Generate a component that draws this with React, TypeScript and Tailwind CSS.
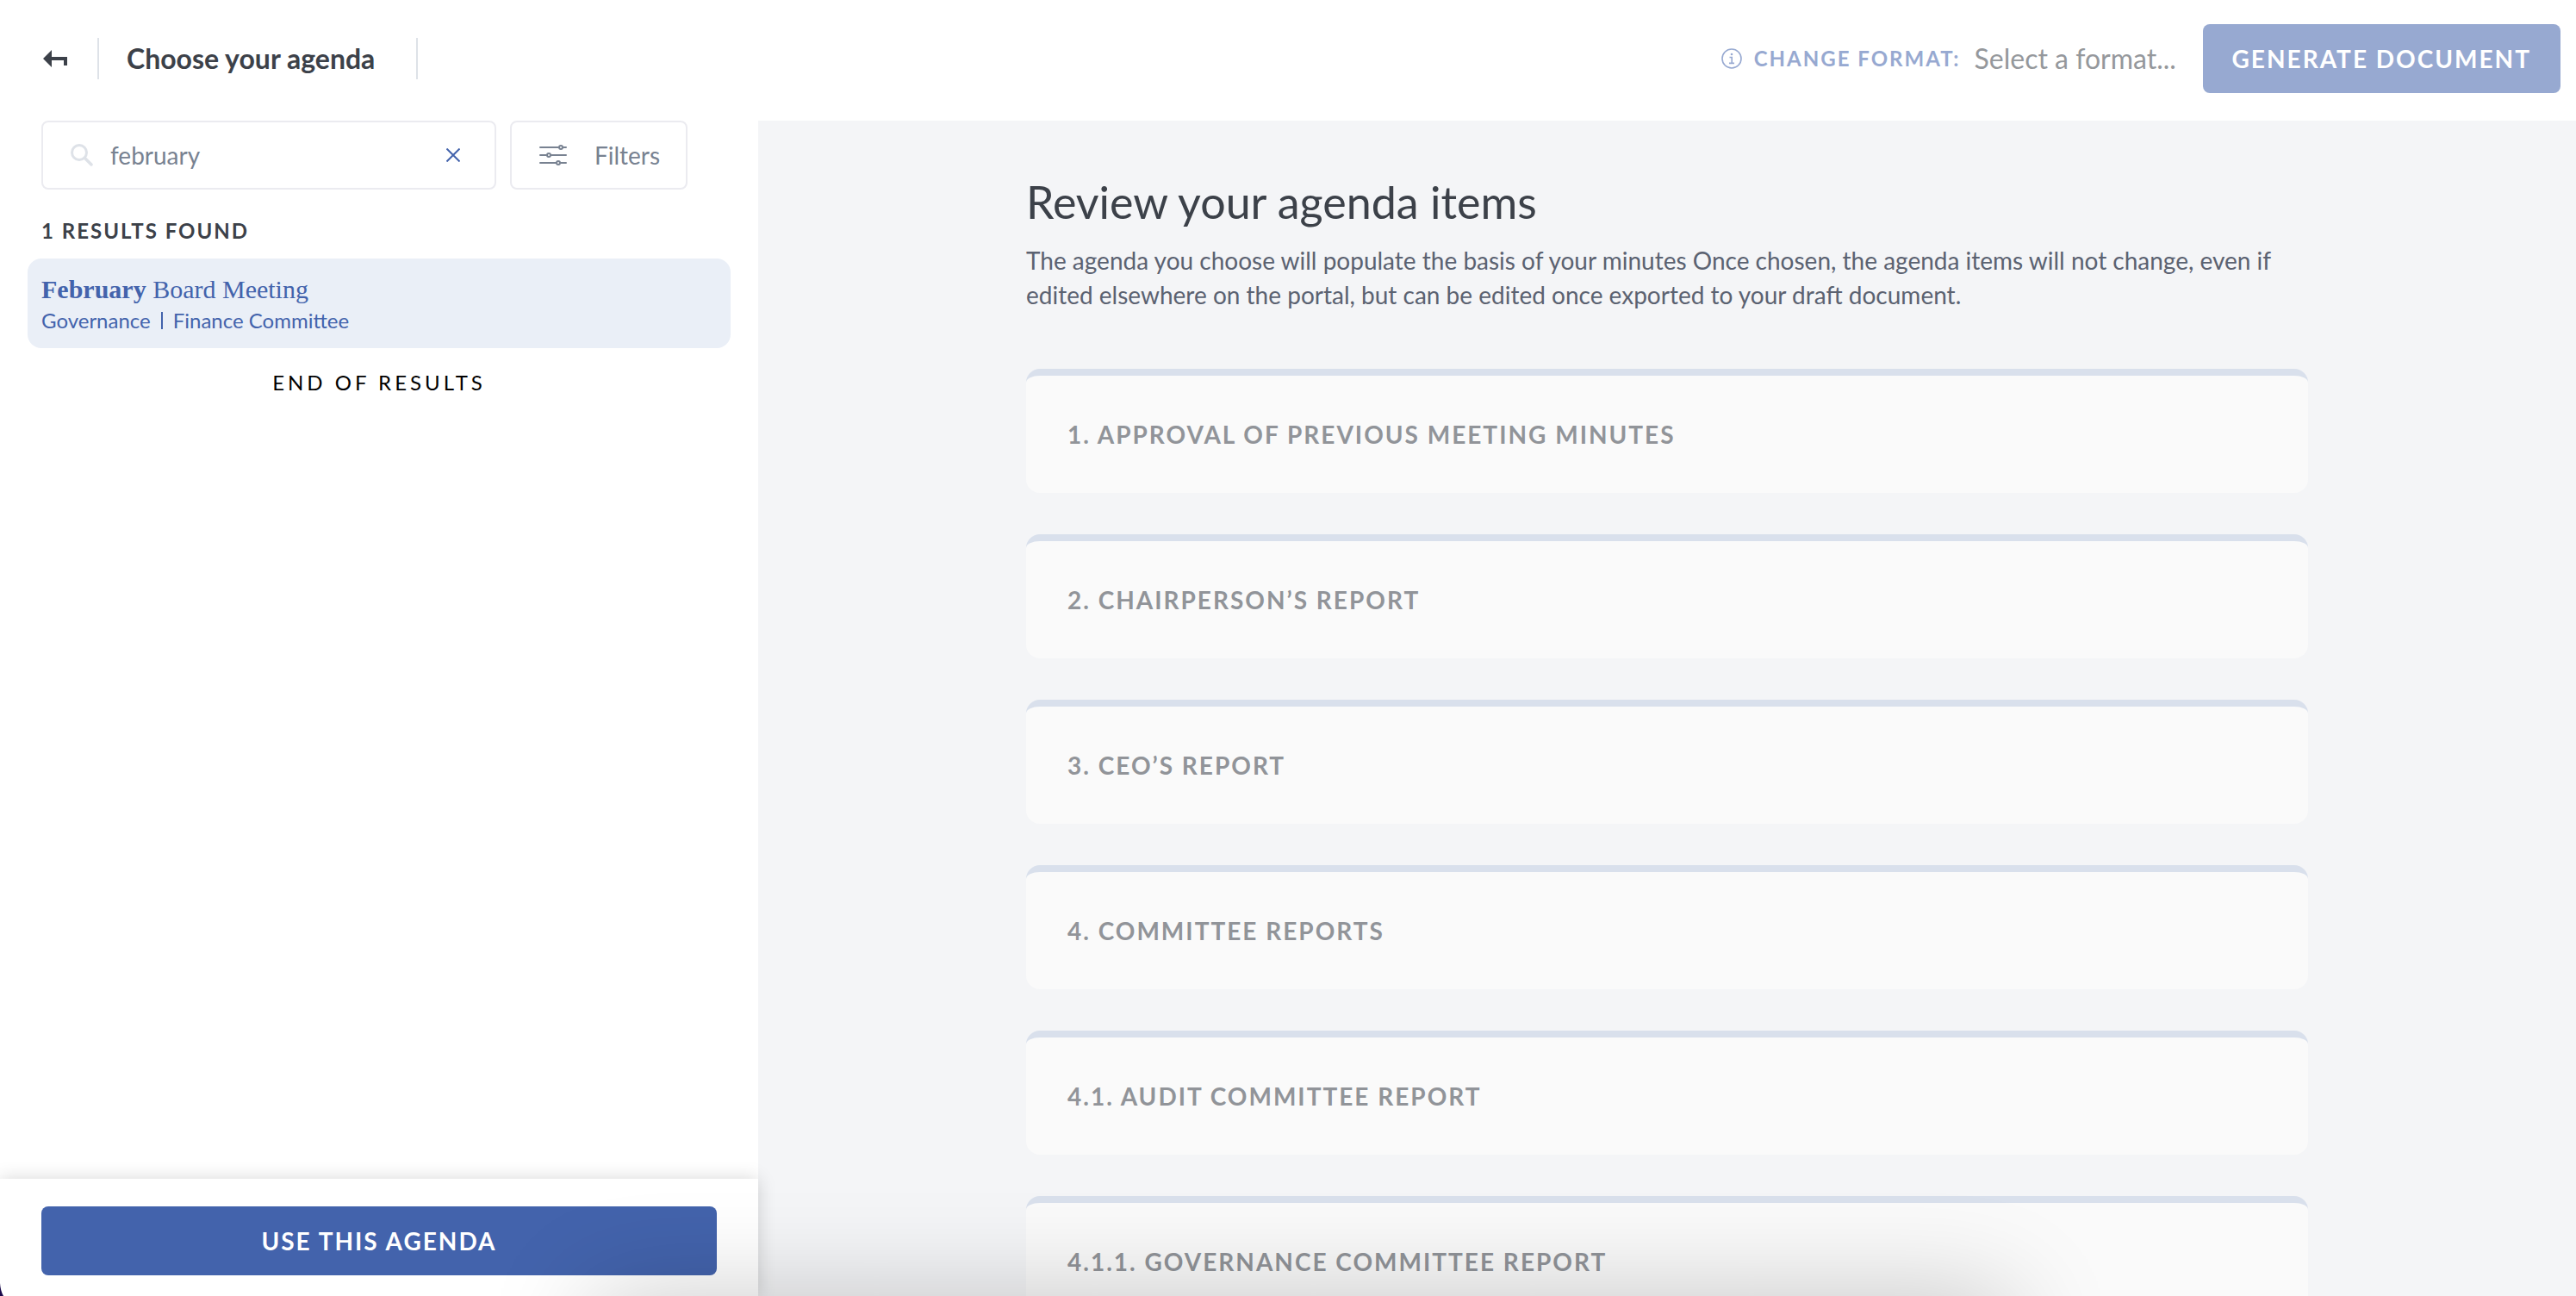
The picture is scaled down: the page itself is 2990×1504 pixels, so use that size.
import { useState } from "react";

const agendaItems = [
	"1. Approval of previous meeting minutes",
	"2. Chairperson’s report",
	"3. CEO’s report",
	"4. Committee reports",
	"4.1. Audit committee report",
	"4.1.1. Governance committee report",
];

function BackIcon() {
	return (
		<svg viewBox="0 0 28 20" className="w-7 h-5" fill="currentColor">
			<path d="M10 0v8h18v10h-4v-6H10v8L0 10z" />
		</svg>
	);
}

function SearchIcon() {
	return (
		<svg
			viewBox="0 0 26 26"
			className="w-[26px] h-[26px] shrink-0 text-[#dee2e8]"
			fill="none"
			stroke="currentColor"
			strokeWidth="3"
			strokeLinecap="round"
		>
			<circle cx="10" cy="10" r="8.5" />
			<path d="M16.5 16.5l7.5 7.5" strokeWidth="3.5" />
		</svg>
	);
}

function CloseIcon() {
	return (
		<svg
			viewBox="0 0 16 16"
			className="w-4 h-4"
			fill="none"
			stroke="currentColor"
			strokeWidth="2"
		>
			<path d="M.5.5l15 15M15.5.5l-15 15" />
		</svg>
	);
}

function SlidersIcon() {
	return (
		<svg
			viewBox="0 0 32 24"
			className="w-8 h-6"
			fill="none"
			stroke="currentColor"
			strokeWidth="2"
			strokeLinecap="round"
		>
			<path d="M1 3h21M28 3h3M1 12h7M14 12h17M1 21h18M25 21h6" />
			<circle cx="25" cy="3" r="2" />
			<circle cx="11" cy="12" r="2" />
			<circle cx="22" cy="21" r="2" />
		</svg>
	);
}

function InfoIcon() {
	return (
		<svg
			viewBox="0 0 24 24"
			className="w-6 h-6 shrink-0"
			fill="none"
			stroke="currentColor"
			strokeWidth="1.6"
		>
			<circle cx="12" cy="12" r="11" />
			<path d="M9.5 10.5h2.7V17M9 17.4h6" />
			<circle cx="12" cy="7" r="1.3" fill="currentColor" stroke="none" />
		</svg>
	);
}

function Header() {
	return (
		<header className="h-[140px] shrink-0 flex items-start justify-between bg-white pl-12 pr-[18px]">
			<div className="flex items-center h-12 mt-11">
				<button type="button" aria-label="Back" className="w-8 flex justify-center">
					<BackIcon />
				</button>
				<div className="w-0.5 h-12 bg-[#dee2e8] ml-[33px]" />
				<h1 className="text-[32px] leading-12 font-bold ml-8 mr-12">
					Choose your agenda
				</h1>
				<div className="w-0.5 h-12 bg-[#dee2e8]" />
			</div>
			<div className="flex items-center mt-7 h-20">
				<label
					htmlFor="format"
					className="flex items-center gap-[14px] text-2xl font-bold uppercase tracking-[2px] text-[#97a9d1]"
				>
					<InfoIcon />
					Change format:
				</label>
				<select
					id="format"
					className="appearance-none text-[32px] leading-12 text-[#95989c] ml-4 mr-[30px]"
				>
					<option>Select a format...</option>
				</select>
				<button
					type="button"
					className="h-20 px-[34px] rounded-lg bg-[#97a9d1] text-white text-[28px] font-bold uppercase tracking-[2px]"
				>
					Generate document
				</button>
			</div>
		</header>
	);
}

function Sidebar() {
	const [query, setQuery] = useState("february");
	return (
		<aside className="relative w-[880px] shrink-0 flex flex-col bg-white">
			<div className="flex gap-4 px-12">
				<div className="w-[528px] h-20 flex items-center rounded-lg border-2 border-[#ebebf0] px-8">
					<SearchIcon />
					<input
						aria-label="Search agendas"
						value={query}
						onChange={(e) => setQuery(e.target.value)}
						className="flex-1 min-w-0 ml-5 text-[28px] text-[#788291] outline-none"
					/>
					<button
						type="button"
						aria-label="Clear search"
						onClick={() => setQuery("")}
						className="px-2 text-[#4363ac]"
					>
						<CloseIcon />
					</button>
				</div>
				<button
					type="button"
					className="w-[206px] h-20 flex items-center gap-8 rounded-lg border-2 border-[#ebebf0] pl-8 text-[28px] text-[#788291]"
				>
					<SlidersIcon />
					Filters
				</button>
			</div>
			<p className="px-12 mt-8 text-2xl leading-8 font-bold uppercase tracking-[2px]">
				1 results found
			</p>
			<a
				href="#february"
				className="block h-[104px] mx-8 mt-4 px-4 pt-4 rounded-2xl bg-[#eaeff7] text-[#4363ac]"
			>
				<div className="font-['Liberation_Serif',serif] text-[30px] leading-10">
					<b>February</b> Board Meeting
				</div>
				<div className="flex items-center gap-3 text-2xl leading-8">
					Governance
					<span className="w-0.5 h-5 bg-[#4363ac]" />
					Finance Committee
				</div>
			</a>
			<p className="mt-6 text-center text-2xl leading-8 uppercase tracking-[4px] text-black">
				End of results
			</p>
			<div className="mt-auto px-12 pt-8 pb-6 bg-white shadow-[0_0_20px_rgba(0,0,0,0.16)]">
				<button
					type="button"
					className="w-full h-20 rounded-lg bg-[#4363ac] text-white text-[28px] font-bold uppercase tracking-[2px]"
				>
					Use this agenda
				</button>
			</div>
		</aside>
	);
}

function AgendaPreview() {
	return (
		<main className="flex-1 overflow-hidden bg-[#f4f5f7] px-12 pt-[62px]">
			<div className="max-w-[1488px] mx-auto">
				<h2 className="text-[52px] leading-16">Review your agenda items</h2>
				<p className="mt-4 text-[28px] leading-10 text-[#5b6271]">
					The agenda you choose will populate the basis of your minutes Once
					chosen, the agenda items will not change, even if edited elsewhere on
					the portal, but can be edited once exported to your draft document.
				</p>
				<div className="mt-[66px] flex flex-col gap-12">
					{agendaItems.map((item) => (
						<section
							key={item}
							className="h-36 flex items-center rounded-2xl border-t-8 border-[#d9e0ec] bg-[#fafafa] px-12"
						>
							<h3 className="text-[28px] font-bold uppercase tracking-[2px] text-[#919499]">
								{item}
							</h3>
						</section>
					))}
				</div>
			</div>
		</main>
	);
}

export default function App() {
	return (
		<div className="relative h-screen flex flex-col overflow-hidden font-['Lato',sans-serif] text-[#3c4149]">
			<Header />
			<div className="flex-1 min-h-0 flex">
				<Sidebar />
				<AgendaPreview />
			</div>
			{/* shadow rising from the bottom edge, and the dark window corner */}
			<div className="absolute left-[23%] right-[22%] top-full h-40 shadow-[0_0_120px_rgba(0,0,0,0.21)] pointer-events-none" />
			<svg
				viewBox="0 0 4 15"
				className="absolute left-0 bottom-0 w-1 h-[15px] text-[#1b0a4a]"
				fill="currentColor"
			>
				<path d="M0 0Q.5 9 4 15H0z" />
			</svg>
		</div>
	);
}
